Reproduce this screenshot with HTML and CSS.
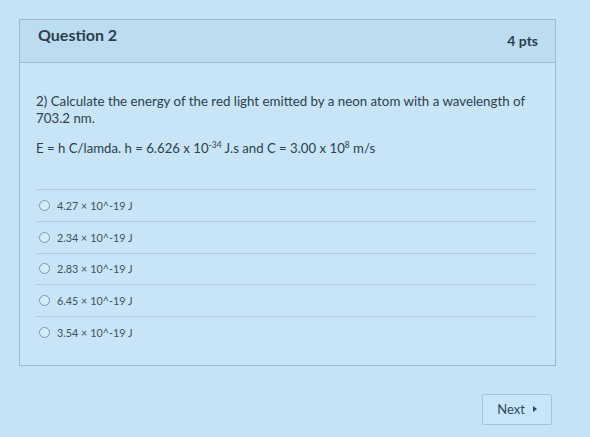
FILE: index.html
```html
<!DOCTYPE html>
<html>
<head>
<meta charset="utf-8">
<link rel="stylesheet" href="styles.css">
</head>
<body>
<div class="page">
  <div class="card">
    <div class="card-header">
      <span class="q-title">Question 2</span>
      <span class="q-pts">4 pts</span>
    </div>
    <div class="card-body">
      <p class="q-text">2) Calculate the energy of the red light emitted by a neon atom with a wavelength of 703.2 nm.</p>
      <p class="q-formula">E = h C/lamda. h = 6.626 x 10<sup>-34</sup> J.s and C = 3.00 x 10<sup>8</sup> m/s</p>
      <div class="answers">
        <label class="answer"><span class="radio"></span><span class="a-text">4.27 × 10^-19 J</span></label>
        <label class="answer"><span class="radio"></span><span class="a-text">2.34 × 10^-19 J</span></label>
        <label class="answer"><span class="radio"></span><span class="a-text">2.83 × 10^-19 J</span></label>
        <label class="answer"><span class="radio"></span><span class="a-text">6.45 × 10^-19 J</span></label>
        <label class="answer"><span class="radio"></span><span class="a-text">3.54 × 10^-19 J</span></label>
      </div>
    </div>
  </div>
  <div class="footer">
    <button class="next-btn">Next <span class="tri"></span></button>
  </div>
</div>
</body>
</html>
```
FILE: styles.css
```css
html, body {
  margin: 0;
  padding: 0;
  background: #c4e3f6;
}
.page {
  width: 590px;
  height: 437px;
  box-sizing: border-box;
  padding: 19px 0 0 19px;
  font-family: Lato, "Open Sans", sans-serif;
  color: #2d3b45;
  overflow: hidden;
}
.card {
  width: 537px;
  border: 1px solid #9fb9c9;
  box-sizing: border-box;
  background: #c7e5f7;
}
.card-header {
  height: 43px;
  box-sizing: border-box;
  border-bottom: 1px solid #9fb9c9;
  background: #bcdcf0;
  display: flex;
  align-items: center;
  justify-content: space-between;
  padding: 0 17px 0 18px;
}
.q-title {
  font-size: 16px;
  font-weight: 700;
  color: #2b3f4c;
  margin-top: -13px;
}
.q-pts {
  font-size: 14px;
  font-weight: 700;
  color: #2b3f4c;
  margin-top: -2px;
}
.card-body {
  padding: 30px 18px 17px 16px;
}
.q-text {
  margin: 0;
  font-size: 13.3px;
  line-height: 17px;
  color: #2e3e4a;
  padding-right: 10px;
}
.q-formula {
  margin: 13px 0 0 0;
  font-size: 13.2px;
  line-height: 17px;
  color: #2e3e4a;
}
.q-formula sup {
  font-size: 8.5px;
  line-height: 0;
  vertical-align: 5px;
}
.answers {
  margin-top: 32px;
  display: flex;
  flex-direction: column;
}
.answer {
  height: 31.75px;
  box-sizing: border-box;
  border-top: 1px solid #afcbdc;
  display: flex;
  align-items: center;
  padding-left: 3px;
  gap: 7px;
}
.radio {
  width: 11px;
  height: 11px;
  border: 1px solid #7f98a8;
  border-radius: 50%;
  box-sizing: border-box;
  background: #d3ecfa;
}
.a-text {
  font-size: 10.8px;
  color: #41525e;
}
.footer {
  display: flex;
  justify-content: flex-end;
  padding: 28px 38px 0 0;
}
.next-btn {
  width: 70px;
  height: 31px;
  border: 1px solid #a9c3d3;
  background: #c9e6f8;
  border-radius: 2px;
  font-family: Lato, "Open Sans", sans-serif;
  font-size: 13px;
  color: #2e4a5a;
  display: flex;
  align-items: center;
  justify-content: center;
  gap: 8px;
  padding: 0;
}
.tri {
  width: 0;
  height: 0;
  border-top: 3px solid transparent;
  border-bottom: 3px solid transparent;
  border-left: 4px solid #2e4a5a;
}
```
